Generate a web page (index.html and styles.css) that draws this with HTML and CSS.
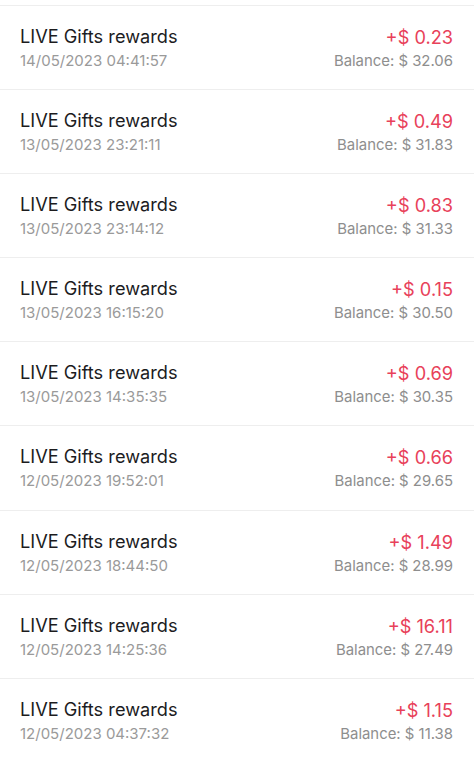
FILE: index.html
```html
<!DOCTYPE html>
<html lang="en">
<head>
<meta charset="utf-8">
<link rel="stylesheet" href="styles.css">
</head>
<body>
<div class="list">
  <div class="row"><div class="left"><div class="title">LIVE Gifts rewards</div><div class="date">14/05/2023 04:41:57</div></div><div class="right"><div class="amount">+$ 0.23</div><div class="balance">Balance: $ 32.06</div></div></div>
  <div class="row"><div class="left"><div class="title">LIVE Gifts rewards</div><div class="date">13/05/2023 23:21:11</div></div><div class="right"><div class="amount">+$ 0.49</div><div class="balance">Balance: $ 31.83</div></div></div>
  <div class="row"><div class="left"><div class="title">LIVE Gifts rewards</div><div class="date">13/05/2023 23:14:12</div></div><div class="right"><div class="amount">+$ 0.83</div><div class="balance">Balance: $ 31.33</div></div></div>
  <div class="row"><div class="left"><div class="title">LIVE Gifts rewards</div><div class="date">13/05/2023 16:15:20</div></div><div class="right"><div class="amount">+$ 0.15</div><div class="balance">Balance: $ 30.50</div></div></div>
  <div class="row"><div class="left"><div class="title">LIVE Gifts rewards</div><div class="date">13/05/2023 14:35:35</div></div><div class="right"><div class="amount">+$ 0.69</div><div class="balance">Balance: $ 30.35</div></div></div>
  <div class="row"><div class="left"><div class="title">LIVE Gifts rewards</div><div class="date">12/05/2023 19:52:01</div></div><div class="right"><div class="amount">+$ 0.66</div><div class="balance">Balance: $ 29.65</div></div></div>
  <div class="row"><div class="left"><div class="title">LIVE Gifts rewards</div><div class="date">12/05/2023 18:44:50</div></div><div class="right"><div class="amount">+$ 1.49</div><div class="balance">Balance: $ 28.99</div></div></div>
  <div class="row"><div class="left"><div class="title">LIVE Gifts rewards</div><div class="date">12/05/2023 14:25:36</div></div><div class="right"><div class="amount">+$ 16.11</div><div class="balance">Balance: $ 27.49</div></div></div>
  <div class="row"><div class="left"><div class="title">LIVE Gifts rewards</div><div class="date">12/05/2023 04:37:32</div></div><div class="right"><div class="amount">+$ 1.15</div><div class="balance">Balance: $ 11.38</div></div></div>
</div>
</body>
</html>
```
FILE: styles.css
```css
html, body {
  margin: 0;
  padding: 0;
  background: #ffffff;
}
body {
  font-family: Inter, "Noto Sans", sans-serif;
  overflow: hidden;
}
.list {
  padding-top: 5px;
}
.row {
  display: flex;
  justify-content: space-between;
  align-items: flex-start;
  height: 84.1px;
  box-sizing: border-box;
  border-top: 1px solid #eeeeee;
  padding: 17px 21px 0 20px;
}
.title {
  font-size: 18.2px;
  line-height: 26px;
  color: #1c1c1e;
}
.date {
  font-size: 15px;
  line-height: 20px;
  margin-top: 2px;
  color: #9a9a9a;
}
.right {
  text-align: right;
}
.amount {
  font-size: 18.2px;
  line-height: 26px;
  margin-top: 1px;
  color: #e8415a;
}
.balance {
  font-size: 14.9px;
  line-height: 20px;
  margin-top: 1px;
  color: #8e8e8e;
}
```
